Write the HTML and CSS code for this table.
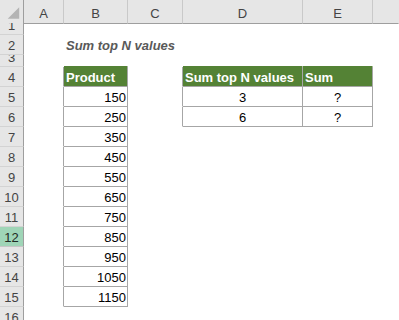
FILE: index.html
```html
<!DOCTYPE html>
<html>
<head>
<meta charset="utf-8">
<link rel="stylesheet" href="styles.css">
</head>
<body>
<div class="sheet">
  <div class="row hdr">
    <div class="c corner"><svg width="24" height="23" viewBox="0 0 24 23"><polygon points="20,7 20,19 8,19" fill="#b4b4b4"/></svg></div>
    <div class="c ch">A</div>
    <div class="c ch">B</div>
    <div class="c ch">C</div>
    <div class="c ch">D</div>
    <div class="c ch">E</div>
    <div class="c ch last"></div>
  </div>
  <div class="row short">
    <div class="c rh">1</div><div class="c"></div><div class="c"></div><div class="c"></div><div class="c"></div><div class="c"></div><div class="c"></div>
  </div>
  <div class="row">
    <div class="c rh">2</div><div class="c"></div><div class="c title">Sum top N values</div><div class="c"></div><div class="c"></div><div class="c"></div><div class="c"></div>
  </div>
  <div class="row short">
    <div class="c rh">3</div><div class="c"></div><div class="c top"></div><div class="c"></div><div class="c top"></div><div class="c top"></div><div class="c"></div>
  </div>
  <div class="row">
    <div class="c rh">4</div><div class="c edge"></div><div class="c th">Product</div><div class="c edge"></div><div class="c th">Sum top N values</div><div class="c th">Sum</div><div class="c"></div>
  </div>
  <div class="row">
    <div class="c rh">5</div><div class="c edge"></div><div class="c td num">150</div><div class="c edge"></div><div class="c td mid">3</div><div class="c td mid">?</div><div class="c"></div>
  </div>
  <div class="row">
    <div class="c rh">6</div><div class="c edge"></div><div class="c td num">250</div><div class="c edge"></div><div class="c td mid">6</div><div class="c td mid">?</div><div class="c"></div>
  </div>
  <div class="row">
    <div class="c rh">7</div><div class="c edge"></div><div class="c td num">350</div><div class="c"></div><div class="c"></div><div class="c"></div><div class="c"></div>
  </div>
  <div class="row">
    <div class="c rh">8</div><div class="c edge"></div><div class="c td num">450</div><div class="c"></div><div class="c"></div><div class="c"></div><div class="c"></div>
  </div>
  <div class="row">
    <div class="c rh">9</div><div class="c edge"></div><div class="c td num">550</div><div class="c"></div><div class="c"></div><div class="c"></div><div class="c"></div>
  </div>
  <div class="row">
    <div class="c rh">10</div><div class="c edge"></div><div class="c td num">650</div><div class="c"></div><div class="c"></div><div class="c"></div><div class="c"></div>
  </div>
  <div class="row">
    <div class="c rh">11</div><div class="c edge"></div><div class="c td num">750</div><div class="c"></div><div class="c"></div><div class="c"></div><div class="c"></div>
  </div>
  <div class="row">
    <div class="c rh sel">12</div><div class="c edge"></div><div class="c td num">850</div><div class="c"></div><div class="c"></div><div class="c"></div><div class="c"></div>
  </div>
  <div class="row">
    <div class="c rh">13</div><div class="c edge"></div><div class="c td num">950</div><div class="c"></div><div class="c"></div><div class="c"></div><div class="c"></div>
  </div>
  <div class="row">
    <div class="c rh">14</div><div class="c edge"></div><div class="c td num">1050</div><div class="c"></div><div class="c"></div><div class="c"></div><div class="c"></div>
  </div>
  <div class="row">
    <div class="c rh">15</div><div class="c edge"></div><div class="c td num">1150</div><div class="c"></div><div class="c"></div><div class="c"></div><div class="c"></div>
  </div>
  <div class="row">
    <div class="c rh">16</div><div class="c"></div><div class="c"></div><div class="c"></div><div class="c"></div><div class="c"></div><div class="c"></div>
  </div>
</div>
</body>
</html>
```

FILE: styles.css
```css
* {
  box-sizing: border-box;
  margin: 0;
  padding: 0;
}

html, body {
  width: 399px;
  height: 320px;
  overflow: hidden;
  background: #ffffff;
}

body {
  font-family: "Liberation Sans", Arial, sans-serif;
  font-size: 13px;
  color: #000000;
}

.sheet {
  display: flex;
  flex-direction: column;
}

.row {
  display: grid;
  grid-template-columns: 24px 40px 64px 55px 120px 70px 1fr;
  height: 20px;
}

.row.hdr {
  height: 23px;
}

.row.short {
  height: 12px;
}

.c {
  min-width: 0;
  display: flex;
  align-items: flex-end;
  padding: 0 2px 1px 2px;
  line-height: 15px;
  white-space: nowrap;
  border-right: 1px solid transparent;
  border-bottom: 1px solid transparent;
}

.corner {
  background: #e6e6e6;
  border-right-color: #9e9e9e;
  border-bottom-color: #9e9e9e;
  padding: 0;
}

.corner svg {
  display: block;
}

.ch {
  background: #e6e6e6;
  color: #444444;
  justify-content: center;
  padding-bottom: 2px;
  border-right-color: #c9c9c9;
  border-bottom-color: #9e9e9e;
}

.ch.last {
  border-right-color: transparent;
}

.rh {
  background: #e6e6e6;
  color: #444444;
  justify-content: center;
  overflow: hidden;
  border-right-color: #9e9e9e;
  border-bottom-color: #d3d3d3;
}

.rh.sel {
  background: #9fd5b7;
  color: #1f2a24;
  border-bottom-color: #c6c6c6;
}

.title {
  font-weight: bold;
  font-style: italic;
  color: #595959;
  overflow: visible;
}

.top {
  border-bottom-color: #548235;
}

.edge {
  border-right-color: #a6a6a6;
}

.th {
  background: #548235;
  color: #ffffff;
  font-weight: bold;
  border-right-color: #a6a6a6;
  border-bottom-color: #a6a6a6;
}

.td {
  border-right-color: #a6a6a6;
  border-bottom-color: #a6a6a6;
}

.num {
  justify-content: flex-end;
  padding-right: 1px;
}

.mid {
  justify-content: center;
}
```
